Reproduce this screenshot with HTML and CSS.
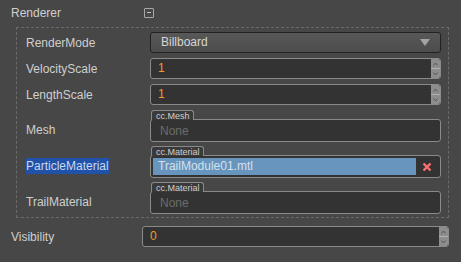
FILE: index.html
```html
<!DOCTYPE html>
<html lang="en">
<head>
  <meta charset="UTF-8">
  <title>Renderer</title>
  <link rel="stylesheet" href="styles.css">
</head>
<body>
  <div class="header">
    <span class="label">Renderer</span>
    <span class="fold"></span>
  </div>

  <!-- RENDERER PROPS -->
  <div class="group">
    <div class="row">
      <span class="label">RenderMode</span>
      <div class="select">Billboard<span class="caret"></span></div>
    </div>
    <div class="row">
      <span class="label">VelocityScale</span>
      <div class="num">
        <span class="val">1</span>
        <span class="spin">
          <i><svg width="5" height="4" viewBox="0 0 5 4"><path d="M0.5 3.5 L2.5 1 L4.5 3.5" stroke="#555" fill="none"/></svg></i>
          <i><svg width="5" height="4" viewBox="0 0 5 4"><path d="M0.5 0.5 L2.5 3 L4.5 0.5" stroke="#555" fill="none"/></svg></i>
        </span>
      </div>
    </div>
    <div class="row">
      <span class="label">LengthScale</span>
      <div class="num">
        <span class="val">1</span>
        <span class="spin">
          <i><svg width="5" height="4" viewBox="0 0 5 4"><path d="M0.5 3.5 L2.5 1 L4.5 3.5" stroke="#555" fill="none"/></svg></i>
          <i><svg width="5" height="4" viewBox="0 0 5 4"><path d="M0.5 0.5 L2.5 3 L4.5 0.5" stroke="#555" fill="none"/></svg></i>
        </span>
      </div>
    </div>
    <div class="row obj-row">
      <span class="label">Mesh</span>
      <div class="asset">
        <span class="tab">cc.Mesh</span>
        <div class="field"><span class="empty">None</span></div>
      </div>
    </div>
    <div class="row obj-row">
      <span class="label"><span class="picked">ParticleMaterial</span></span>
      <div class="asset">
        <span class="tab">cc.Material</span>
        <div class="field">
          <span class="chosen">TrailModule01.mtl</span>
          <svg class="clear" width="10" height="10" viewBox="0 0 10 10">
            <path d="M1.5 1.5 L8.5 8.5 M8.5 1.5 L1.5 8.5" stroke="#ff6f6f" stroke-width="2.4" fill="none"/>
          </svg>
        </div>
      </div>
    </div>
    <div class="row obj-row">
      <span class="label">TrailMaterial</span>
      <div class="asset">
        <span class="tab">cc.Material</span>
        <div class="field"><span class="empty">None</span></div>
      </div>
    </div>
  </div>

  <div class="row outer">
    <span class="label">Visibility</span>
    <div class="num">
      <span class="val">0</span>
      <span class="spin">
        <i><svg width="5" height="4" viewBox="0 0 5 4"><path d="M0.5 3.5 L2.5 1 L4.5 3.5" stroke="#555" fill="none"/></svg></i>
        <i><svg width="5" height="4" viewBox="0 0 5 4"><path d="M0.5 0.5 L2.5 3 L4.5 0.5" stroke="#555" fill="none"/></svg></i>
      </span>
    </div>
  </div>
</body>
</html>
```

FILE: styles.css
```css
body {
  margin: 0;
  background-color: #474747;
  font-family: "Liberation Sans", Arial, sans-serif;
  font-size: 12px;
  color: #cfcfcf;
}

.header {
  display: flex;
  align-items: center;
  height: 25px;
  padding-left: 11px;
}

.header .label {
  width: 133px;
}

.fold {
  width: 8px;
  height: 8px;
  border: 1px solid #a8a8a8;
  border-radius: 1px;
  position: relative;
}

.fold::after {
  content: "";
  position: absolute;
  left: 2px;
  top: 3px;
  width: 4px;
  height: 1px;
  background: #c8c8c8;
}

.group {
  margin: 2px 12px 0 16px;
  border: 1px dashed #6a6a6a;
  padding: 4px 7px 3px 9px;
  display: flex;
  flex-direction: column;
  gap: 5px;
}

.row {
  display: flex;
  align-items: center;
}

.row .label {
  width: 124px;
  flex: none;
}

.obj-row {
  align-items: flex-end;
}

.obj-row .label {
  height: 23px;
  line-height: 23px;
}

.obj-row + .obj-row {
  margin-top: -1px;
}

.picked {
  background: #1f52a8;
  color: #c9d8ee;
  padding: 1px 0;
}

.select {
  flex: 1;
  height: 19px;
  line-height: 19px;
  border: 1px solid #222;
  border-radius: 3px;
  background: linear-gradient(#585858, #4c4c4c);
  padding-left: 10px;
  color: #d6d6d6;
  position: relative;
}

.caret {
  position: absolute;
  right: 10px;
  top: 6px;
  border-left: 5px solid transparent;
  border-right: 5px solid transparent;
  border-top: 7px solid #a4a4a4;
}

.num {
  flex: 1;
  height: 19px;
  display: flex;
  border: 1px solid #8a8a8a;
  border-radius: 3px;
  background: #333;
}

.val {
  flex: 1;
  line-height: 19px;
  padding-left: 7px;
  color: #f09a2a;
}

.spin {
  width: 9px;
  display: flex;
  flex-direction: column;
  background: #8d8d8d;
  border-radius: 0 2px 2px 0;
}

.spin i {
  flex: 1;
  display: flex;
  align-items: center;
  justify-content: center;
}

.spin i + i {
  border-top: 1px solid #b0b0b0;
}

.asset {
  flex: 1;
  display: flex;
  flex-direction: column;
  align-items: flex-start;
}

.tab {
  height: 9px;
  line-height: 10px;
  font-size: 9px;
  padding: 0 3px 0 4px;
  margin-bottom: -1px;
  border: 1px solid #8a8a8a;
  border-bottom: none;
  border-radius: 3px 3px 0 0;
  background: #3a3a3a;
  color: #cfcfcf;
  position: relative;
  margin-left: 1px;
}

.field {
  align-self: stretch;
  height: 21px;
  display: flex;
  align-items: center;
  border: 1px solid #8a8a8a;
  border-radius: 3px;
  background: #333;
  padding: 0 2px;
}

.empty {
  padding-left: 7px;
  color: #6c6c6c;
}

.chosen {
  flex: 1;
  height: 17px;
  line-height: 17px;
  padding-left: 5px;
  background: #6795bd;
  color: #d4e1ee;
}

.clear {
  margin: 0 6px 0 6px;
}

.outer {
  margin-top: 8px;
  padding: 0 12px 0 11px;
}

.outer .label {
  width: 131px;
}
```
